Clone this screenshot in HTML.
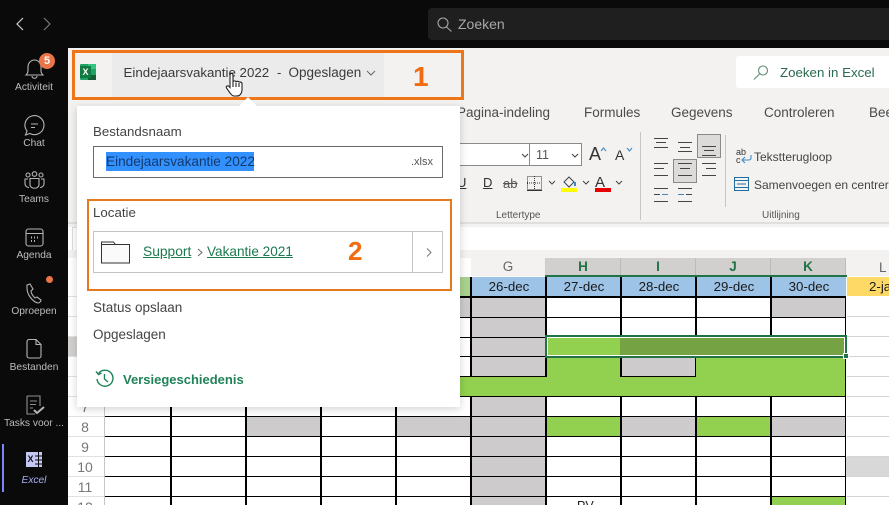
<!DOCTYPE html>
<html lang="nl"><head><meta charset="utf-8"><title>Excel</title>
<style>
html,body{margin:0;padding:0;width:889px;height:505px;overflow:hidden;background:#0a0a0a;font-family:"Liberation Sans",sans-serif}
body{position:relative}
.a{position:absolute}
.t{position:absolute;white-space:nowrap;line-height:1}
.n{position:absolute;left:0;width:68px;text-align:center;font-size:10.2px;color:#bdbdbd;white-space:nowrap;line-height:1}
svg{position:absolute;overflow:visible}
.g{position:absolute;background:#cdcbcb}
.lg{position:absolute;background:#92d050}
.h{position:absolute;background:#000}
.rn{position:absolute;left:67px;width:36px;text-align:center;color:#777;font-size:14px;line-height:20px}
.col{position:absolute;top:258px;height:18px;width:75px;text-align:center;font-size:13.5px;line-height:18px;color:#217346;font-weight:bold;background:#d2d0ce;box-sizing:border-box;border-right:1px solid #bbb}
.date{position:absolute;top:277px;height:19px;width:74px;text-align:center;font-size:13.3px;line-height:19px;color:#1a1a1a;background:#9dc3e6}
</style></head><body>
<div class="a" style="left:0;top:0;width:889px;height:505px;background:#0a0a0a"></div>
<div class="a" style="left:428px;top:8px;width:461px;height:32px;background:#1f1f1f;border-radius:4px 0 0 4px"></div>
<svg style="left:437px;top:17px" width="15" height="15" fill="none" stroke="#a8a8a8" stroke-width="1.1"><circle cx="6" cy="6" r="5"/><path d="M9.500 10l5 4.500"/></svg>
<div class="t" style="left:458px;top:17px;font-size:14px;color:#a8a8a8">Zoeken</div>
<svg style="left:15px;top:17px" width="50" height="14" fill="none" stroke-width="1.2"><path d="M8 1L2 7l6 6" stroke="#cfcfcf"/><path d="M29 1l6 6-6 6" stroke="#7a7a7a"/></svg>

<!-- sidebar -->
<svg style="left:24px;top:58px" width="22" height="22" fill="none" stroke="#b5b5b5" stroke-width="1.1"><path d="M2 17c1-1 2-2 2-4V9c0-4 3-7 6.500-7S17 5 17 9v4c0 2 1 3 2 4z"/><path d="M8 18c0 3 5 3 5 0"/></svg>
<div class="a" style="left:39px;top:53px;width:16px;height:16px;border-radius:50%;background:#e97548;color:#fff;font-size:11px;font-weight:bold;text-align:center;line-height:16px">5</div>
<div class="n" style="top:83px">Activiteit</div>
<svg style="left:24px;top:115px" width="21" height="21" fill="none" stroke="#b5b5b5" stroke-width="1.1"><path d="M3 16A9.500 9.500 0 1 1 6 18.500L1.500 20z"/><path d="M7 9h7M7 12.500h4"/></svg>
<div class="n" style="top:139px">Chat</div>
<svg style="left:24px;top:171px" width="21" height="20" fill="none" stroke="#b5b5b5" stroke-width="1.1"><circle cx="4" cy="4" r="2"/><circle cx="10.500" cy="3" r="2.300"/><circle cx="17" cy="4" r="2"/><path d="M6 7.500h9v6c0 5-9 5-9 0zM4 8H1v5c0 2 2 3.500 4 3.500M17 8h3v5c0 2-2 3.500-4 3.500"/></svg>
<div class="n" style="top:195px">Teams</div>
<svg style="left:25px;top:228px" width="19" height="19" fill="none" stroke="#b5b5b5" stroke-width="1.1"><rect x="1" y="1" width="17" height="17" rx="2.500"/><path d="M1 5.500h17"/><path d="M6 9.500h1M9 9.500h1M12 9.500h1M6 13h1M9 13h1" stroke-width="2"/></svg>
<div class="n" style="top:251px">Agenda</div>
<svg style="left:25px;top:283px" width="18" height="21" fill="none" stroke="#b5b5b5" stroke-width="1.1"><path d="M2 2l3-1 3 5-2 2c0 3 3 6 4 7l2-1 4 3c0 2-2 3-3 3-5-1-11-8-11-15z"/></svg>
<div class="a" style="left:46px;top:276px;width:7px;height:7px;border-radius:50%;background:#e97548"></div>
<div class="n" style="top:307px">Oproepen</div>
<svg style="left:26px;top:339px" width="16" height="20" fill="none" stroke="#b5b5b5" stroke-width="1.1"><path d="M3 .5h7l5 5V17a2 2 0 0 1-2 2H3a2 2 0 0 1-2-2V2.500a2 2 0 0 1 2-2zM10 .5v5h5"/></svg>
<div class="n" style="top:363px">Bestanden</div>
<svg style="left:26px;top:395px" width="19" height="21" fill="none" stroke="#8f8f8f" stroke-width="1.1"><path d="M1 1h13v10M1 1v18h8"/><path d="M4 6h7M4 9.500h6M4 13h3"/><path d="M8 15l3 3 7-6" stroke="#b5b5b5" stroke-width="2"/></svg>
<div class="n" style="top:419px">Tasks voor ...</div>
<div class="a" style="left:2px;top:444px;width:2px;height:48px;background:#7f85f5"></div>
<div class="a" style="left:26px;top:452px;width:16px;height:15px;background:#c5c8f5"></div>
<div class="a" style="left:26px;top:454px;width:9px;height:11px;background:#c5c8f5;color:#111;font-size:9px;font-weight:bold;line-height:11px;text-align:center">X</div>
<svg style="left:35px;top:452px" width="7" height="15" fill="none" stroke="#0a0a0a" stroke-width="1"><path d="M0 4h7M0 8h7M0 12h7M3.500 0v15"/></svg>
<div class="n" style="top:476px;color:#a9adf5;font-style:italic">Excel</div>

<!-- excel body -->
<div class="a" style="left:68px;top:48px;width:821px;height:457px;background:#f3f2f1"></div>
<div class="a" style="left:736px;top:56px;width:153px;height:32px;background:#fff;border-radius:3px 0 0 3px"></div>
<svg style="left:753px;top:65px" width="16" height="15" fill="none" stroke="#5d8d75" stroke-width="1.1"><circle cx="10" cy="5.500" r="4.500"/><path d="M6.500 9L1 14.500"/></svg>
<div class="t" style="left:780px;top:65.500px;font-size:13.3px;color:#2a6a4e">Zoeken in Excel</div>

<!-- tabs -->
<div class="t" style="left:457px;top:105.500px;font-size:13.5px;color:#4a4a4a">Pagina-indeling</div>
<div class="t" style="left:584px;top:105.500px;font-size:13.5px;color:#4a4a4a">Formules</div>
<div class="t" style="left:671px;top:105.500px;font-size:13.5px;color:#4a4a4a">Gegevens</div>
<div class="t" style="left:764px;top:105.500px;font-size:13.5px;color:#4a4a4a">Controleren</div>
<div class="t" style="left:869px;top:105.500px;font-size:13.5px;color:#4a4a4a">Beeld</div>

<!-- ribbon -->
<div class="a" style="left:440px;top:143px;width:90px;height:23px;background:#fff;border:1px solid #8a8a8a;box-sizing:border-box"></div>
<div class="a" style="left:530px;top:143px;width:52px;height:23px;background:#fff;border:1px solid #8a8a8a;border-left:0;box-sizing:border-box"></div>
<div class="t" style="left:536px;top:149px;font-size:12.500px;color:#555">11</div>
<svg style="left:521px;top:153px" width="60" height="6" fill="none" stroke="#444" stroke-width="1.1"><path d="M1 1l3 3 3-3M51 1l3 3 3-3"/></svg>
<div class="t" style="left:589px;top:145px;font-size:18px;color:#333">A</div>
<div class="t" style="left:615px;top:148px;font-size:14px;color:#333">A</div>
<svg style="left:601px;top:147px" width="40" height="6" fill="none" stroke="#3e8ac7" stroke-width="1.1"><path d="M0 4l2.500-3L5 4M26 1l2.500 3L31 1"/></svg>
<div class="a" style="left:640px;top:132px;width:1px;height:88px;background:#c8c6c4"></div>
<div class="t" style="left:457px;top:176px;font-size:13px;color:#333;text-decoration:underline">U</div>
<div class="t" style="left:483px;top:176px;font-size:13px;color:#333;text-decoration:underline">D</div>
<div class="t" style="left:503px;top:177px;font-size:13px;color:#555;text-decoration:line-through">ab</div>
<svg style="left:527px;top:176px" width="16" height="16" fill="none" stroke="#333" stroke-dasharray="1 1"><rect x=".5" y=".5" width="14" height="13"/><path d="M7.500 0v14M0 7h15"/><path d="M0 14.500h15" stroke-dasharray="none"/></svg>
<svg style="left:548px;top:180px" width="8" height="6" fill="none" stroke="#444"><path d="M1 1l3 3 3-3"/></svg>
<svg style="left:562px;top:175px" width="16" height="13" fill="none" stroke="#444"><path d="M2 7l5-5 5 5-5 5z"/><path d="M13 7v4" stroke="#3e8ac7" stroke-width="2"/></svg>
<div class="a" style="left:561px;top:188px;width:16px;height:4px;background:#ffff00"></div>
<svg style="left:582px;top:180px" width="8" height="6" fill="none" stroke="#444"><path d="M1 1l3 3 3-3"/></svg>
<div class="t" style="left:595px;top:175px;font-size:15px;color:#333">A</div>
<div class="a" style="left:595px;top:188px;width:16px;height:4px;background:#e60000"></div>
<svg style="left:615px;top:180px" width="8" height="6" fill="none" stroke="#444"><path d="M1 1l3 3 3-3"/></svg>
<div class="t" style="left:496px;top:211px;font-size:10px;color:#555">Lettertype</div>
<!-- align -->
<div class="a" style="left:697px;top:134px;width:24px;height:24px;background:#dcdbda;border:1px solid #8a8a8a;box-sizing:border-box"></div>
<div class="a" style="left:673px;top:159px;width:24px;height:24px;background:#dcdbda;border:1px solid #8a8a8a;box-sizing:border-box"></div>
<svg style="left:654px;top:137px" width="64" height="66" fill="none" stroke="#444" stroke-width="1"><path d="M0 1.500h14M2 5.500h10M0 10.500h14M24 5.500h14M26 10.500h10M24 14.500h14M48 9.500h14M50 13.500h10M48 18.500h14M0 26.500h14M0 31.500h10M0 38.500h14M24 26.500h14M26 31.500h10M24 38.500h14M48 26.500h14M52 31.500h10M48 38.500h14M0 51.500h14M0 57.500h6M0 64.500h14M24 51.500h14M32 57.500h6M24 64.500h14"/><path d="M8 57.500h6M24 57.500h6" stroke="#3e8ac7"/></svg>
<div class="a" style="left:725px;top:135px;width:1px;height:72px;background:#c8c6c4"></div>
<div class="t" style="left:736px;top:148px;font-size:9px;line-height:8px;color:#333;white-space:pre">ab
c</div>
<svg style="left:741px;top:155px" width="11" height="9" fill="none" stroke="#3e8ac7" stroke-width="1.1"><path d="M10 0v3a2 2 0 0 1-2 2H1M4 2L1 5l3 3"/></svg>
<div class="t" style="left:754px;top:150.500px;font-size:12px;color:#444">Tekstterugloop</div>
<svg style="left:734px;top:177px" width="16" height="15" fill="none" stroke="#1f6f9f" stroke-width="1"><rect x=".5" y=".5" width="14" height="13"/><path d="M0 3.500h15M0 10.500h15M3 7h9" /></svg>
<div class="t" style="left:754px;top:179px;font-size:12px;color:#444">Samenvoegen en centreren</div>
<div class="t" style="left:762px;top:211px;font-size:10px;color:#555">Uitlijning</div>
<div class="a" style="left:68px;top:222px;width:821px;height:2px;background:#e0dfdd"></div>
<!-- formula bar -->
<div class="a" style="left:68px;top:224px;width:821px;height:4px;background:#f3f2f1"></div>
<div class="a" style="left:68px;top:227px;width:821px;height:23px;background:#fff;border-bottom:1px solid #e1e1e1"></div>
<div class="a" style="left:72px;top:227px;width:6px;height:22px;background:#fff;border:1px solid #ddd"></div>
<div class="a" style="left:68px;top:250px;width:821px;height:8px;background:#f3f2f1"></div>

<!-- grid -->
<div class="a" style="left:68px;top:258px;width:821px;height:247px;background:#fff"></div>
<div class="a" style="left:471px;top:258px;width:75px;height:18px;background:#f3f2f1;border-right:1px solid #ccc;box-sizing:border-box;text-align:center;font-size:13.5px;line-height:18px;color:#666">G</div>
<div class="col" style="left:546px">H</div><div class="col" style="left:621px">I</div><div class="col" style="left:696px">J</div><div class="col" style="left:771px">K</div>
<div class="a" style="left:846px;top:258px;width:43px;height:18px;background:#f3f2f1"></div>
<div class="t" style="left:879px;top:261px;font-size:13.5px;color:#666">L</div>
<div class="a" style="left:545px;top:275px;width:302px;height:2px;background:#217346"></div>

<div class="a" style="left:460px;top:277px;width:10px;height:19px;background:#a9d18e"></div>
<div class="date" style="left:472px">26-dec</div><div class="date" style="left:547px">27-dec</div><div class="date" style="left:622px">28-dec</div><div class="date" style="left:697px">29-dec</div><div class="date" style="left:772px">30-dec</div>
<div class="a" style="left:847px;top:277px;width:42px;height:19px;background:#ffd966"></div>
<div class="t" style="left:869px;top:280px;font-size:13.3px;color:#1a1a1a">2-ja</div>

<!-- fills -->
<div class="g" style="left:396px;top:297px;width:75px;height:20px"></div>
<div class="g" style="left:771px;top:297px;width:75px;height:20px"></div>
<div class="g" style="left:68px;top:337px;width:36px;height:20px;background:#d2d0ce"></div>
<div class="g" style="left:471px;top:297px;width:75px;height:80px"></div>
<div class="g" style="left:471px;top:397px;width:75px;height:108px"></div>
<div class="lg" style="left:396px;top:377px;width:450px;height:20px"></div>
<div class="lg" style="left:546px;top:357px;width:300px;height:20px"></div>
<div class="g" style="left:621px;top:357px;width:75px;height:20px"></div>
<div class="g" style="left:246px;top:417px;width:75px;height:20px"></div>
<div class="g" style="left:396px;top:417px;width:75px;height:20px"></div>
<div class="lg" style="left:546px;top:417px;width:75px;height:20px"></div>
<div class="g" style="left:621px;top:417px;width:75px;height:20px"></div>
<div class="lg" style="left:696px;top:417px;width:75px;height:20px"></div>
<div class="g" style="left:771px;top:417px;width:75px;height:20px"></div>
<div class="a" style="left:846px;top:457px;width:43px;height:20px;background:#d8d8d8"></div>
<div class="lg" style="left:771px;top:497px;width:75px;height:8px"></div>

<!-- light gridlines right -->
<div class="a" style="left:847px;top:316px;width:42px;height:189px;background:repeating-linear-gradient(to bottom,#d4d4d4 0,#d4d4d4 1px,transparent 1px,transparent 20px)"></div>
<!-- row header lines -->
<div class="a" style="left:68px;top:296px;width:36px;height:209px;background:repeating-linear-gradient(to bottom,#e1e1e1 0,#e1e1e1 1px,transparent 1px,transparent 20px)"></div>
<div class="a" style="left:104px;top:258px;width:1px;height:247px;background:#c6c6c6"></div>
<div class="rn" style="top:397px">7</div><div class="rn" style="top:417px">8</div><div class="rn" style="top:437px">9</div><div class="rn" style="top:457px">10</div><div class="rn" style="top:477px">11</div><div class="rn" style="top:497px">12</div>

<!-- black horizontal lines -->
<div class="h" style="left:460px;top:296px;width:386px;height:2px"></div>
<div class="h" style="left:105px;top:317px;width:741px;height:1px"></div>
<div class="h" style="left:105px;top:337px;width:741px;height:1px"></div>
<div class="h" style="left:105px;top:356px;width:741px;height:1px"></div>
<div class="h" style="left:460px;top:376px;width:86px;height:1px"></div>
<div class="h" style="left:621px;top:376px;width:75px;height:1px"></div>
<div class="h" style="left:105px;top:396px;width:741px;height:1px"></div>
<div class="h" style="left:105px;top:416px;width:741px;height:1px"></div>
<div class="h" style="left:105px;top:436px;width:741px;height:1px"></div>
<div class="h" style="left:105px;top:456px;width:741px;height:1px"></div>
<div class="h" style="left:105px;top:476px;width:741px;height:1px"></div>
<div class="h" style="left:105px;top:496px;width:741px;height:1px"></div>
<!-- black vertical lines -->
<div class="h" style="left:170px;top:397px;width:2px;height:108px"></div>
<div class="h" style="left:245px;top:397px;width:2px;height:108px"></div>
<div class="h" style="left:320px;top:397px;width:2px;height:108px"></div>
<div class="h" style="left:395px;top:397px;width:2px;height:108px"></div>
<div class="h" style="left:470px;top:277px;width:2px;height:100px"></div>
<div class="h" style="left:470px;top:397px;width:2px;height:108px"></div>
<div class="h" style="left:545px;top:277px;width:2px;height:100px"></div>
<div class="h" style="left:545px;top:397px;width:2px;height:108px"></div>
<div class="h" style="left:620px;top:277px;width:2px;height:100px"></div>
<div class="h" style="left:620px;top:397px;width:2px;height:108px"></div>
<div class="h" style="left:695px;top:277px;width:2px;height:60px"></div>
<div class="h" style="left:695px;top:357px;width:1px;height:20px"></div>
<div class="h" style="left:695px;top:397px;width:2px;height:108px"></div>
<div class="h" style="left:770px;top:277px;width:2px;height:60px"></div>
<div class="h" style="left:770px;top:397px;width:2px;height:108px"></div>
<div class="h" style="left:845px;top:296px;width:1px;height:209px"></div>
<div class="t" style="left:577px;top:500px;font-size:12.500px;color:#222">PV</div>

<!-- selection -->
<div class="a" style="left:545px;top:335px;width:302px;height:23px;background:#fff;box-sizing:border-box;border:2px solid #217346"></div>
<div class="a" style="left:548px;top:338px;width:72px;height:17px;background:#92d050"></div>
<div class="a" style="left:620px;top:338px;width:224px;height:17px;background:#75a343"></div>
<div class="a" style="left:843px;top:353px;width:4px;height:4px;background:#217346;border:1px solid #fff"></div>

<!-- title area -->
<div class="a" style="left:72px;top:50px;width:392px;height:50px;box-sizing:border-box;border:3px solid #ee7518;background:#f3f2f1"></div>
<div class="a" style="left:112px;top:53px;width:272px;height:44px;background:#ebebeb"></div>
<div class="a" style="left:80px;top:64px;width:16px;height:16px;background:#21a366;border-radius:1px"></div>
<div class="a" style="left:88px;top:64px;width:8px;height:5px;background:#33c481"></div>
<div class="a" style="left:88px;top:75px;width:8px;height:5px;background:#185c37"></div>
<div class="a" style="left:80px;top:66px;width:11px;height:12px;background:#107c41;color:#fff;font-size:9px;font-weight:bold;text-align:center;line-height:12px">X</div>
<div class="t" style="left:123.500px;top:65.500px;font-size:13.300px;color:#3a3a3a">Eindejaarsvakantie 2022</div>
<div class="t" style="left:277px;top:65.500px;font-size:13px;color:#3a3a3a">-</div>
<div class="t" style="left:288.500px;top:65.500px;font-size:13.500px;color:#3a3a3a">Opgeslagen</div>
<svg style="left:366px;top:70px" width="10" height="6" fill="none" stroke="#666"><path d="M1 1l4 4 4-4"/></svg>
<div class="t" style="left:413px;top:63px;font-size:28px;font-weight:bold;color:#f26b0f">1</div>

<!-- panel -->
<div class="a" style="left:77px;top:106px;width:383px;height:301px;background:#fff;box-shadow:0 2px 8px rgba(0,0,0,.18)"></div>
<div class="a" style="left:241px;top:100px;width:14px;height:14px;background:#fff;transform:rotate(45deg)"></div>
<div class="t" style="left:93px;top:125px;font-size:13.300px;color:#444">Bestandsnaam</div>
<div class="a" style="left:93px;top:146px;width:350px;height:32px;box-sizing:border-box;border:1px solid #6a6a6a;background:#fff"></div>
<div class="t" style="left:106px;top:152px;width:148px;height:19px;background:#3390ff;font-size:13.600px;line-height:19px;color:#123a6b">Eindejaarsvakantie 2022</div>
<div class="t" style="left:411px;top:157px;font-size:11px;color:#555">.xlsx</div>
<div class="a" style="left:87px;top:199px;width:365px;height:92px;box-sizing:border-box;border:2px solid #e57a1c"></div>
<div class="t" style="left:93px;top:206px;font-size:13.300px;color:#444">Locatie</div>
<div class="a" style="left:93px;top:231px;width:350px;height:42px;box-sizing:border-box;border:1px solid #c4c4c4"></div>
<div class="a" style="left:412px;top:231px;width:1px;height:42px;background:#c4c4c4"></div>
<svg style="left:101px;top:241px" width="30" height="23" fill="#fafafa" stroke="#333" stroke-width="1"><path d="M.5 22V1h12l2 2.500H28.500V22z"/><path d="M.5 3.500h14" fill="none"/></svg>
<div class="t" style="left:143px;top:245px;font-size:13.800px;color:#1b7a4f;text-decoration:underline">Support</div>
<svg style="left:197px;top:248px" width="6" height="9" fill="none" stroke="#666"><path d="M1 1l4 3.500-4 3.500"/></svg>
<div class="t" style="left:207px;top:245px;font-size:13.600px;color:#1b7a4f;text-decoration:underline">Vakantie 2021</div>
<div class="t" style="left:348px;top:238px;font-size:26px;font-weight:bold;color:#f26b0f">2</div>
<svg style="left:426px;top:248px" width="6" height="9" fill="none" stroke="#777"><path d="M1 .5l4 4-4 4"/></svg>
<div class="t" style="left:93px;top:301px;font-size:13.500px;color:#444">Status opslaan</div>
<div class="t" style="left:93px;top:328px;font-size:13.500px;color:#444">Opgeslagen</div>
<svg style="left:95px;top:369px" width="19" height="19" fill="none" stroke="#21835a" stroke-width="1.400"><path d="M3.500 4.500A8 8 0 1 1 2 10"/><path d="M1 2.500l2.500 3 3-1.500M9.500 5v5l3.500 3"/></svg>
<div class="t" style="left:123px;top:373px;font-size:13px;font-weight:bold;color:#21835a">Versiegeschiedenis</div>

<!-- cursor -->
<svg style="left:225px;top:73px" width="20" height="25" fill="#fff" stroke="#222" stroke-width="1.100"><path d="M5 2c0-2 3-2 3 0v7c0-1.500 3-1.500 3 0 0-1 3-1 3 .5 0-1 3-.5 3 1V17c0 3-2 6-5 6H9c-2 0-3-2-4-3l-3.500-5c-1-1.500 1-3 2.500-1.500l1 1z"/><path d="M8 9v5M11 9.500V14M14 10v4" fill="none"/></svg>
</body></html>
